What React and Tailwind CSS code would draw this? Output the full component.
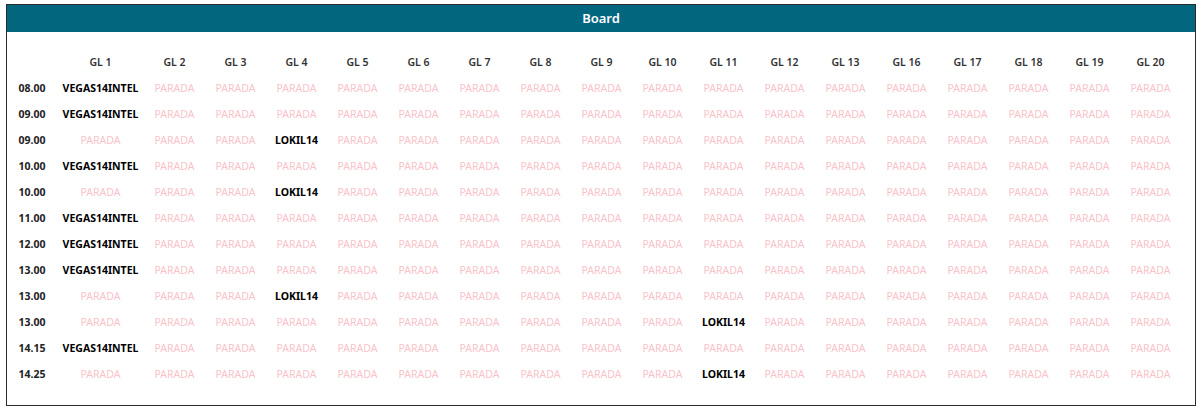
import React from "react";

const lines = [
  "GL 1", "GL 2", "GL 3", "GL 4", "GL 5", "GL 6", "GL 7", "GL 8", "GL 9",
  "GL 10", "GL 11", "GL 12", "GL 13", "GL 16", "GL 17", "GL 18", "GL 19", "GL 20",
];

// which line is busy at each slot, everything else is PARADA
const slots = [
  { time: "08.00", line: "GL 1", job: "VEGAS14INTEL" },
  { time: "09.00", line: "GL 1", job: "VEGAS14INTEL" },
  { time: "09.00", line: "GL 4", job: "LOKIL14" },
  { time: "10.00", line: "GL 1", job: "VEGAS14INTEL" },
  { time: "10.00", line: "GL 4", job: "LOKIL14" },
  { time: "11.00", line: "GL 1", job: "VEGAS14INTEL" },
  { time: "12.00", line: "GL 1", job: "VEGAS14INTEL" },
  { time: "13.00", line: "GL 1", job: "VEGAS14INTEL" },
  { time: "13.00", line: "GL 4", job: "LOKIL14" },
  { time: "13.00", line: "GL 11", job: "LOKIL14" },
  { time: "14.15", line: "GL 1", job: "VEGAS14INTEL" },
  { time: "14.25", line: "GL 11", job: "LOKIL14" },
];

const cols = "grid grid-cols-[50px_87px_repeat(17,61px)]";

const Board = () => {
  return (
    <div className="pt-1 pl-[6px] bg-white w-[1200px] h-[411px]">
      <div
        className="w-[1190px] border border-[#2b2b2b] bg-white"
        style={{ fontFamily: '"Segoe UI", "Noto Sans", "Open Sans", sans-serif' }}
      >
        <div className="h-[27px] bg-[#03667f] flex items-center justify-center text-white text-[13px] font-semibold">
          Board
        </div>

        <div className="pt-[18px] pb-[17px] text-[10.5px]">
          <div className={`${cols} h-[26px] items-center`}>
            <div></div>
            {lines.map((l) => (
              <div key={l} className="text-center font-semibold text-[#333]">
                {l}
              </div>
            ))}
          </div>

          {slots.map((s, index) => (
            <div key={index} className={`${cols} h-[26px] items-center`}>
              <div className="text-center font-bold text-[#222]">{s.time}</div>
              {lines.map((l) =>
                l === s.line ? (
                  <div key={l} className="text-center font-bold text-black whitespace-nowrap">
                    {s.job}
                  </div>
                ) : (
                  <div key={l} className="text-center text-[#f8c3ca]">
                    PARADA
                  </div>
                )
              )}
            </div>
          ))}
        </div>
      </div>
    </div>
  );
};

export default function App() {
  return <Board />;
}
